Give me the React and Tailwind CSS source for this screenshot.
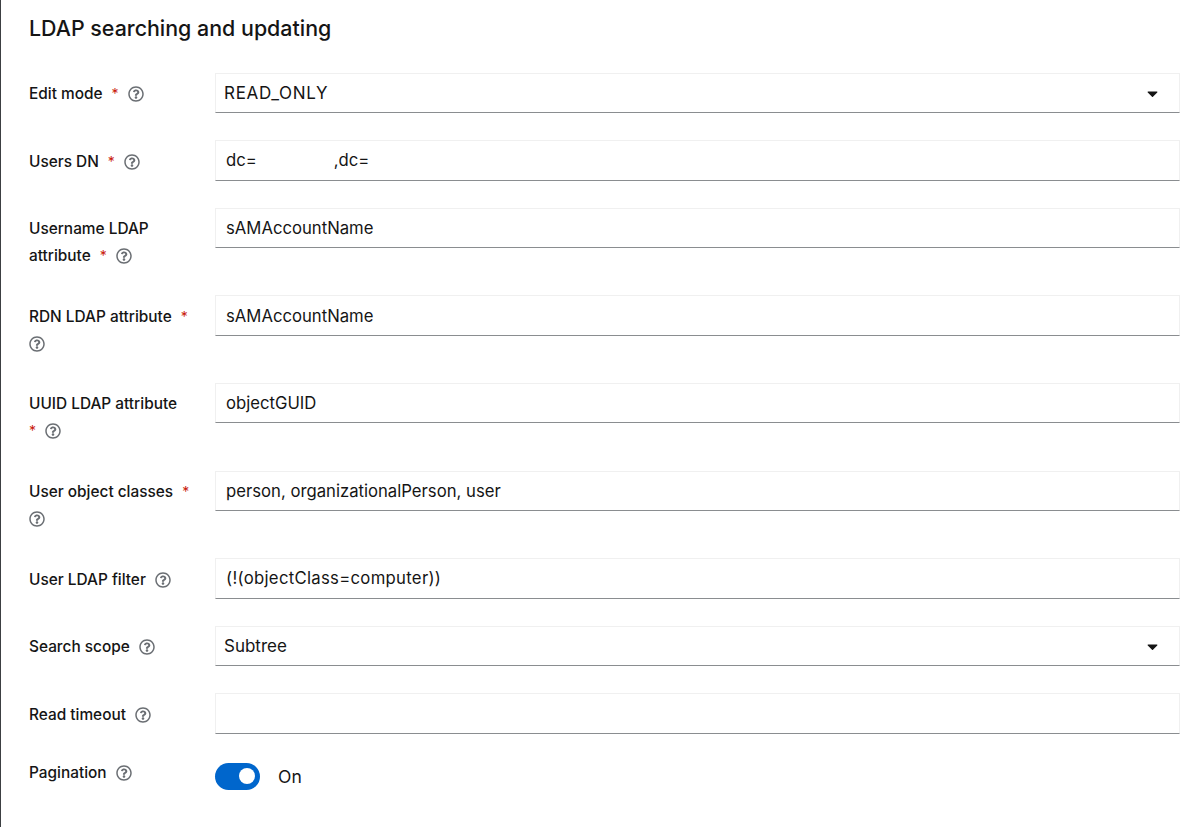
import React from "react";
import { FaRegQuestionCircle, FaCaretDown } from "react-icons/fa";

const Help = ({ className = "" }) => (
  <FaRegQuestionCircle className={`inline-block text-[16px] text-[#6a6e73] align-[-3px] ${className}`} />
);
const Star = () => <span className="ml-[9px] text-[#c9190b] text-[14px] font-normal">*</span>;

function Label({ first, rest, required, breakBefore }) {
  return (
    <div className="text-[15.4px] font-medium leading-[27px] text-[#151515] pt-[7.5px]">
      {first}
      {rest && <br />}
      {rest && rest !== "*" && rest}
      {rest === "*" ? <span className="text-[#c9190b] text-[14px] font-normal">*</span> : required && <Star />}
      {breakBefore && <br />}
      <Help className={breakBefore ? "" : "ml-[9px]"} />
    </div>
  );
}

function Field({ children, select, tracking }) {
  return (
    <div className={`h-[40.4px] flex items-center justify-between border border-[#f0f0f0] border-b-[#8a8d90] bg-white pr-[18px] pt-[1px] text-[#151515] ${select ? "pl-[8px] text-[17px]" : "pl-[10px] text-[16.7px]"}`}>
      <div className={`whitespace-pre ${tracking || ""}`}>{children}</div>
      {select && <FaCaretDown className="text-[17px] text-[#151515]" />}
    </div>
  );
}

function Row({ label, children, tall }) {
  return (
    <div className={`grid grid-cols-[186px_965px] ${tall ? "h-[60.5px]" : "h-[40.4px]"}`}>
      {label}
      {children}
    </div>
  );
}

export default function App() {
  return (
    <div className="w-[1201px] h-[827px] overflow-hidden bg-white border-l border-l-[#3c3f42] pl-[28px] font-['Inter',sans-serif]">
      <h1 className="pt-[13px] text-[21.4px] leading-[30px] font-medium text-[#151515] mb-[29.8px]">LDAP searching and updating</h1>
      <div className="flex flex-col gap-[27.1px]">
        <Row label={<Label first="Edit mode" required />}>
          <Field select tracking="tracking-[0.7px]">READ_ONLY</Field>
        </Row>
        <Row label={<Label first="Users DN" required />}>
          <Field>dc=<span className="inline-block w-[77px]" />,dc=</Field>
        </Row>
        <Row tall label={<Label first="Username LDAP" rest="attribute" required />}>
          <Field>sAMAccountName</Field>
        </Row>
        <Row tall label={<Label first="RDN LDAP attribute" required breakBefore />}>
          <Field>sAMAccountName</Field>
        </Row>
        <Row tall label={<Label first="UUID LDAP attribute" rest="*" />}>
          <Field>objectGUID</Field>
        </Row>
        <Row tall label={<Label first="User object classes" required breakBefore />}>
          <Field>person, organizationalPerson, user</Field>
        </Row>
        <Row label={<Label first="User LDAP filter" />}>
          <Field tracking="tracking-[0.3px]">(!(objectClass=computer))</Field>
        </Row>
        <Row label={<Label first="Search scope" />}>
          <Field select>Subtree</Field>
        </Row>
        <Row label={<Label first="Read timeout" />}>
          <Field />
        </Row>
        <div className="grid grid-cols-[186px_965px] mt-[2.3px]">
          <div className="text-[15.4px] font-medium leading-[27px] text-[#151515] -mt-[4px]">
            Pagination
            <Help className="ml-[9px]" />
          </div>
          <div className="flex items-center gap-[18px] h-[27px]">
            <div className="w-[45px] h-[27px] rounded-full bg-[#06c] flex items-center justify-end pr-[5px]">
              <div className="w-[16px] h-[16px] rounded-full bg-white" />
            </div>
            <span className="text-[17.5px] text-[#151515] pt-[1px]">On</span>
          </div>
        </div>
      </div>
    </div>
  );
}
